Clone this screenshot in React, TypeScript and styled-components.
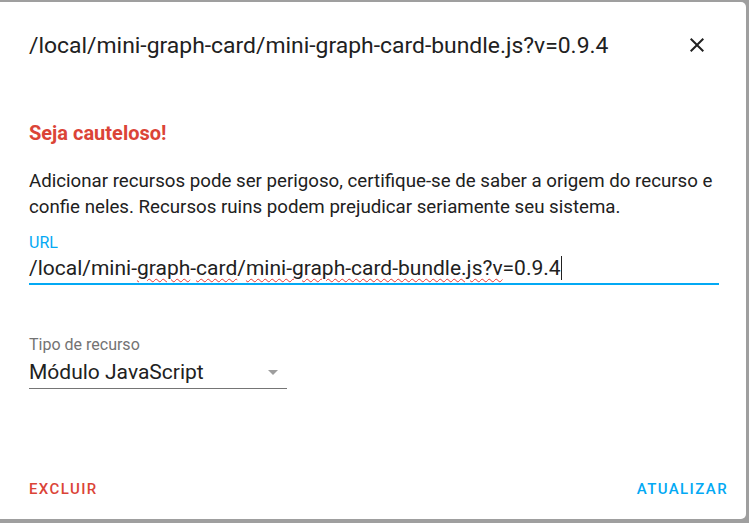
import styled, { createGlobalStyle } from 'styled-components'

const Global = createGlobalStyle`
  html, body {
    margin: 0;
    padding: 0;
    background: #9f9f9f;
    font-family: Roboto, "Noto Sans", sans-serif;
    overflow: hidden;
  }
`;

const Dialog = styled.div`
  box-sizing: border-box;
  width: 750px;
  height: 517px;
  margin: 2px 0 0 -4px;
  padding: 0 0 0 4px;
  background: #ffffff;
  border-radius: 5px;
  display: flex;
  flex-direction: column;
`;

const Header = styled.div`
  display: flex;
  align-items: center;
  justify-content: space-between;
  height: 86px;
  padding: 0 37px 0 29px;
`;

const Title = styled.h2`
  margin: 0;
  font-size: 22.9px;
  font-weight: 400;
  color: #212121;
`;

const CloseButton = styled.button`
  border: 0;
  background: none;
  padding: 0;
  width: 24px;
  height: 24px;
  color: #212121;
  display: flex;
  cursor: pointer;
`;

const Content = styled.div`
  flex: 1;
  padding: 33px 27px 0 29px;
`;

const Warning = styled.h3`
  margin: 0;
  font-size: 20px;
  font-weight: 700;
  color: #db4437;
  line-height: 24px;
`;

const Text = styled.p`
  margin: 23px 0 0;
  font-size: 18.7px;
  line-height: 26px;
  color: #212121;
`;

const Field = styled.div<{ $width?: string; $gap: number }>`
  width: ${p => p.$width || '100%'};
  margin-top: ${p => p.$gap}px;
  display: flex;
  flex-direction: column;
`;

const Label = styled.span<{ $focused?: boolean }>`
  font-size: 16px;
  line-height: 18px;
  color: ${p => (p.$focused ? '#03a9f4' : '#737373')};
`;

const Value = styled.div<{ $focused?: boolean }>`
  display: flex;
  align-items: center;
  justify-content: space-between;
  font-size: 21px;
  line-height: 28px;
  color: #212121;
  padding: ${p => (p.$focused ? '2px 0 1px' : '4px 0 2px')};
  border-bottom: ${p => (p.$focused ? '2px solid #03a9f4' : '1px solid #757575')};
`;

const Spell = styled.span`
  text-decoration: underline wavy #e53935;
  text-decoration-thickness: 1px;
  text-underline-offset: 3px;
`;

const Caret = styled.span`
  display: inline-block;
  width: 1px;
  height: 24px;
  background: #212121;
  vertical-align: -5px;
`;

const Arrow = styled.span`
  width: 0;
  height: 0;
  margin-right: 9px;
  border-left: 5px solid transparent;
  border-right: 5px solid transparent;
  border-top: 5px solid #9e9e9e;
`;

const Footer = styled.div`
  display: flex;
  justify-content: space-between;
  align-items: center;
  padding: 0 10px 13px 21px;
`;

const Action = styled.button<{ $color: string }>`
  border: 0;
  background: none;
  font-family: Roboto, "Noto Sans", sans-serif;
  font-size: 15px;
  line-height: 18px;
  font-weight: 500;
  letter-spacing: 1.4px;
  text-transform: uppercase;
  color: ${p => p.$color};
  padding: 8px;
  cursor: pointer;
`;

const App = () => {
  return (
    <>
      <Global />
      <Dialog>
        <Header>
          <Title>/local/mini-graph-card/mini-graph-card-bundle.js?v=0.9.4</Title>
          <CloseButton aria-label="Fechar">
            <svg width="24" height="24" viewBox="0 0 24 24">
              <path
                fill="currentColor"
                d="M19,6.41L17.59,5L12,10.59L6.41,5L5,6.41L10.59,12L5,17.59L6.41,19L12,13.41L17.59,19L19,17.59L13.41,12L19,6.41Z"
              />
            </svg>
          </CloseButton>
        </Header>
        <Content>
          <Warning>Seja cauteloso!</Warning>
          <Text>
            Adicionar recursos pode ser perigoso, certifique-se de saber a origem do recurso e confie neles. Recursos
            ruins podem prejudicar seriamente seu sistema.
          </Text>
          <Field $gap={14}>
            <Label $focused>URL</Label>
            <Value $focused>
              <span>
                /local/mini-<Spell>graph</Spell>-<Spell>card</Spell>/<Spell>mini-graph-card-bundle.js?v</Spell>=0.9.4
                <Caret />
              </span>
            </Value>
          </Field>
          <Field $width="258px" $gap={51}>
            <Label>Tipo de recurso</Label>
            <Value>
              <span>Módulo JavaScript</span>
              <Arrow />
            </Value>
          </Field>
        </Content>
        <Footer>
          <Action $color="#db4437">Excluir</Action>
          <Action $color="#03a9f4">Atualizar</Action>
        </Footer>
      </Dialog>
    </>
  );
}

export default App
